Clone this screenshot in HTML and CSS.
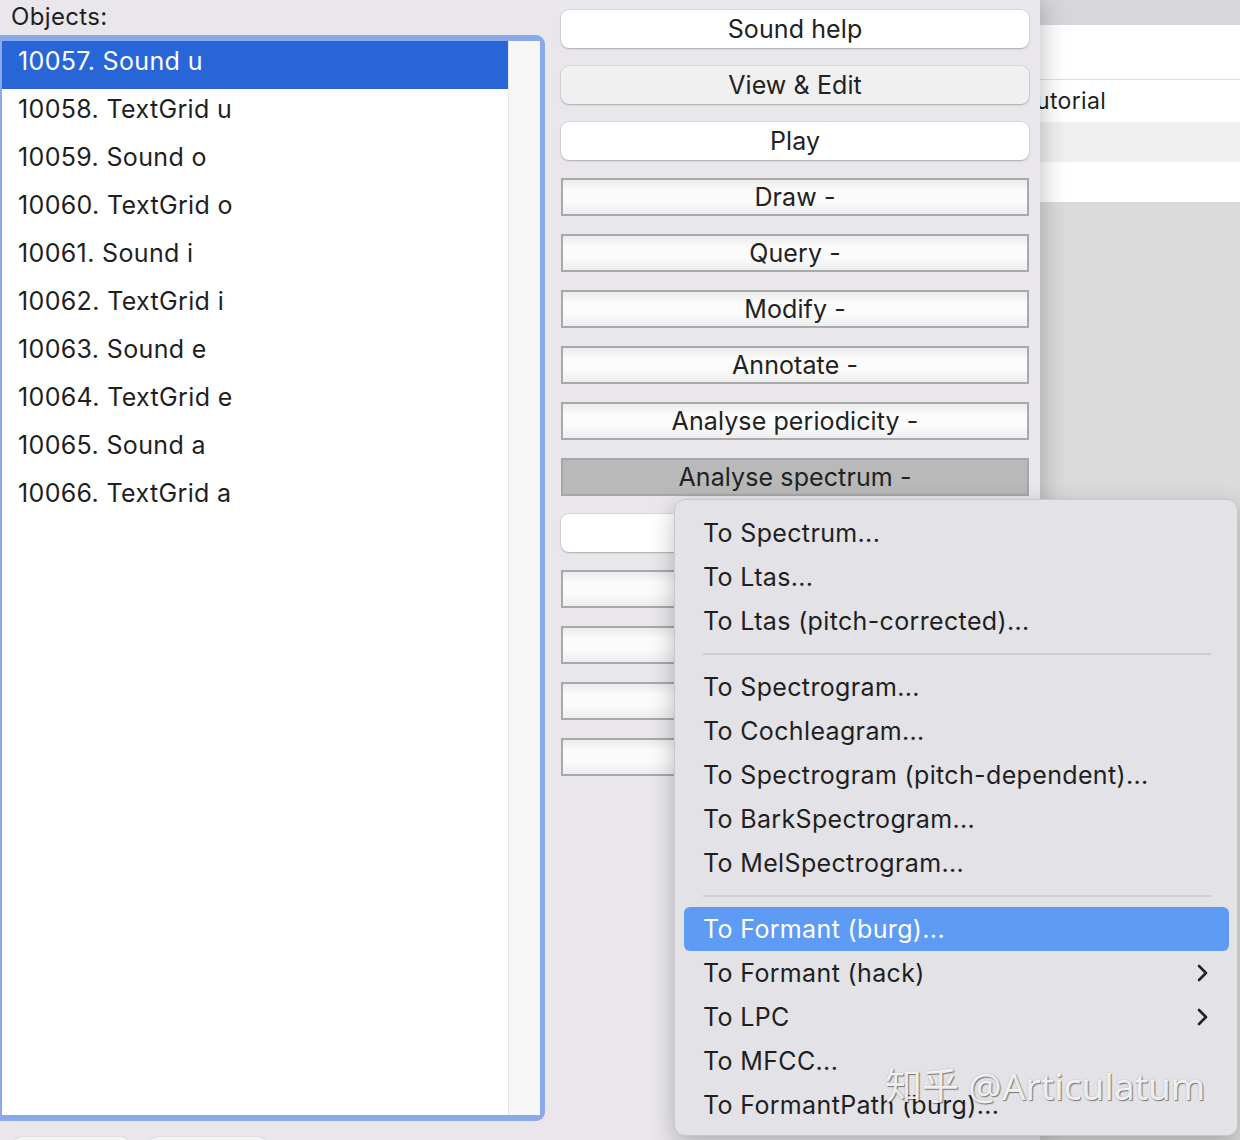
FILE: index.html
```html
<!DOCTYPE html>
<html lang="en">
<head>
	<meta charset="UTF-8">
	<title>Praat Objects</title>
	<link rel="stylesheet" href="styles.css">
</head>
<body>
	<div class="screen">
		<!-- Praat objects window -->
		<div class="praat">
			<div class="objects">
				<div class="objects-label">Objects:</div>
				<div class="listbox">
					<ul class="list">
						<li class="selected">10057. Sound u</li>
						<li>10058. TextGrid u</li>
						<li>10059. Sound o</li>
						<li>10060. TextGrid o</li>
						<li>10061. Sound i</li>
						<li>10062. TextGrid i</li>
						<li>10063. Sound e</li>
						<li>10064. TextGrid e</li>
						<li>10065. Sound a</li>
						<li>10066. TextGrid a</li>
					</ul>
					<div class="scrollbar"></div>
				</div>
				<div class="objects-foot">
					<span class="foot-btn"></span>
					<span class="foot-btn wide"></span>
				</div>
			</div>
			<div class="actions">
				<div class="btn round">Sound help</div>
				<div class="btn round dim">View &amp; Edit</div>
				<div class="btn round">Play</div>
				<div class="btn rect">Draw -</div>
				<div class="btn rect">Query -</div>
				<div class="btn rect">Modify -</div>
				<div class="btn rect">Annotate -</div>
				<div class="btn rect">Analyse periodicity -</div>
				<div class="btn rect pressed">Analyse spectrum -</div>
				<div class="btn round"></div>
				<div class="btn rect"></div>
				<div class="btn rect"></div>
				<div class="btn rect"></div>
				<div class="btn rect"></div>
			</div>
		</div>
		<!-- window behind -->
		<div class="behind">
			<div class="behind-bar"></div>
			<div class="behind-row head"></div>
			<div class="behind-row"><span class="cut">utorial</span></div>
			<div class="behind-row alt"></div>
			<div class="behind-row"></div>
			<div class="behind-rest"></div>
		</div>
		<!-- popup menu -->
		<ul class="menu">
			<li class="item">To Spectrum...</li>
			<li class="item">To Ltas...</li>
			<li class="item">To Ltas (pitch-corrected)...</li>
			<li class="sep"></li>
			<li class="item">To Spectrogram...</li>
			<li class="item">To Cochleagram...</li>
			<li class="item">To Spectrogram (pitch-dependent)...</li>
			<li class="item">To BarkSpectrogram...</li>
			<li class="item">To MelSpectrogram...</li>
			<li class="sep"></li>
			<li class="item active">To Formant (burg)...</li>
			<li class="item">To Formant (hack)<svg class="chev" width="12" height="18" viewBox="0 0 12 18"><polyline points="2,2 9,9 2,16" fill="none" stroke="#222" stroke-width="2.6" stroke-linecap="round" stroke-linejoin="round"/></svg></li>
			<li class="item">To LPC<svg class="chev" width="12" height="18" viewBox="0 0 12 18"><polyline points="2,2 9,9 2,16" fill="none" stroke="#222" stroke-width="2.6" stroke-linecap="round" stroke-linejoin="round"/></svg></li>
			<li class="item">To MFCC...</li>
			<li class="item">To FormantPath (burg)...</li>
		</ul>
		<div class="watermark">知乎 @Articulatum</div>
	</div>
</body>
</html>
```

FILE: styles.css
```css
/*reset*/
body, div, ul, li, span{
	margin: 0;
	padding: 0;
}
li{
	list-style: none;
}
body{
	font: 25px/1.2 Inter, "Noto Sans CJK SC", sans-serif;
	letter-spacing: .35px;
	color: #1f1f1f;
	background: #e9e7eb;
}
.screen{
	position: relative;
	display: flex;
	width: 1240px;
	height: 1140px;
	overflow: hidden;
}
/*praat window*/
.praat{
	position: relative;
	z-index: 1;
	display: flex;
	flex: none;
	width: 1040px;
	background: #e9e7eb;
	box-shadow: 0 0 26px rgba(0,0,0,.28);
}
.objects{
	display: flex;
	flex-direction: column;
	width: 545px;
	flex: none;
	overflow: hidden;
}
.objects-label{
	flex: none;
	height: 35px;
	padding-left: 11px;
	font-size: 24px;
	line-height: 34px;
}
.listbox{
	display: flex;
	flex: none;
	height: 1074px;
	border: 6px solid #8aa9ea;
	border-left-width: 2px;
	border-right-width: 5px;
	border-radius: 0 9px 9px 0;
}
.list{
	flex: 1;
	background: #fff;
}
.list li{
	height: 48px;
	padding-left: 16px;
	line-height: 40px;
}
.list .selected{
	background: #2866d8;
	color: #fff;
}
.scrollbar{
	width: 31px;
	background: #f7f7f8;
	border-left: 1px solid #e6e6e8;
}
.objects-foot{
	display: flex;
	flex: none;
	gap: 22px;
	padding: 16px 0 0 15px;
}
.foot-btn{
	width: 113px;
	height: 20px;
	background: #f4f4f5;
	border-radius: 6px;
	box-shadow: 0 0 1px rgba(0,0,0,.3);
}
.foot-btn.wide{
	width: 115px;
}
/*buttons*/
.actions{
	display: flex;
	flex-direction: column;
	gap: 18px;
	width: 468px;
	margin-left: 16px;
	padding-top: 10px;
}
.btn{
	height: 38px;
	box-sizing: border-box;
	text-align: center;
	line-height: 38px;
	letter-spacing: .1px;
	color: #222;
}
.btn.round{
	background: #fff;
	border-radius: 8px;
	box-shadow: 0 1px 2px rgba(0,0,0,.22), 0 0 0 .5px rgba(0,0,0,.12);
}
.btn.dim{
	background: #f0f0f1;
}
.btn.rect{
	border: 2px solid #a9a9a9;
	line-height: 34px;
	background: linear-gradient(to bottom, #ececec, #fcfcfc 35%, #fafafa 65%, #eeeeee);
}
.btn.pressed{
	background: #b9b9b9;
	border-color: #a7a7a7;
}
/*window behind*/
.behind{
	display: flex;
	flex-direction: column;
	flex: 1;
	background: #dadada;
}
.behind-bar{
	height: 25px;
	background: #d7d6da;
}
.behind-row{
	height: 40px;
	background: #fff;
	font-size: 23px;
	line-height: 42px;
	white-space: nowrap;
	overflow: hidden;
}
.behind-row.head{
	height: 54px;
	border-bottom: 1px solid #dedede;
}
.behind-row.head + .behind-row{
	height: 42px;
}
.behind-row.alt{
	background: #f0f0f0;
}
.cut{
	display: inline-block;
	margin-left: -4px;
}
.behind-rest{
	flex: 1;
	background: #dbdbdb;
}
/*popup menu*/
.menu{
	position: absolute;
	z-index: 2;
	left: 674px;
	top: 499px;
	width: 564px;
	height: 637px;
	box-sizing: border-box;
	padding-top: 11px;
	background: #e3e2e6;
	border: 1px solid #c9c8cc;
	border-radius: 11px;
	box-shadow: 0 8px 24px rgba(0,0,0,.25);
}
.menu .item{
	display: flex;
	justify-content: space-between;
	align-items: center;
	height: 44px;
	margin: 0 8px 0 9px;
	padding: 0 20px 0 19px;
	border-radius: 6px;
}
.menu .active{
	background: #5e9bf4;
	color: #fff;
}
.menu .sep{
	height: 22px;
	margin: 0 26px 0 28px;
	background: linear-gradient(#cdccd0, #cdccd0) no-repeat 0 10px / 100% 2px;
}
.watermark{
	position: absolute;
	z-index: 3;
	left: 885px;
	top: 1064px;
	font: 37px/44px "Noto Sans", "Noto Sans CJK SC", sans-serif;
	letter-spacing: 0;
	color: rgba(255,255,255,.88);
	text-shadow: 1px 1px 1px rgba(0,0,0,.45), 0 0 2px rgba(0,0,0,.2);
}
```
